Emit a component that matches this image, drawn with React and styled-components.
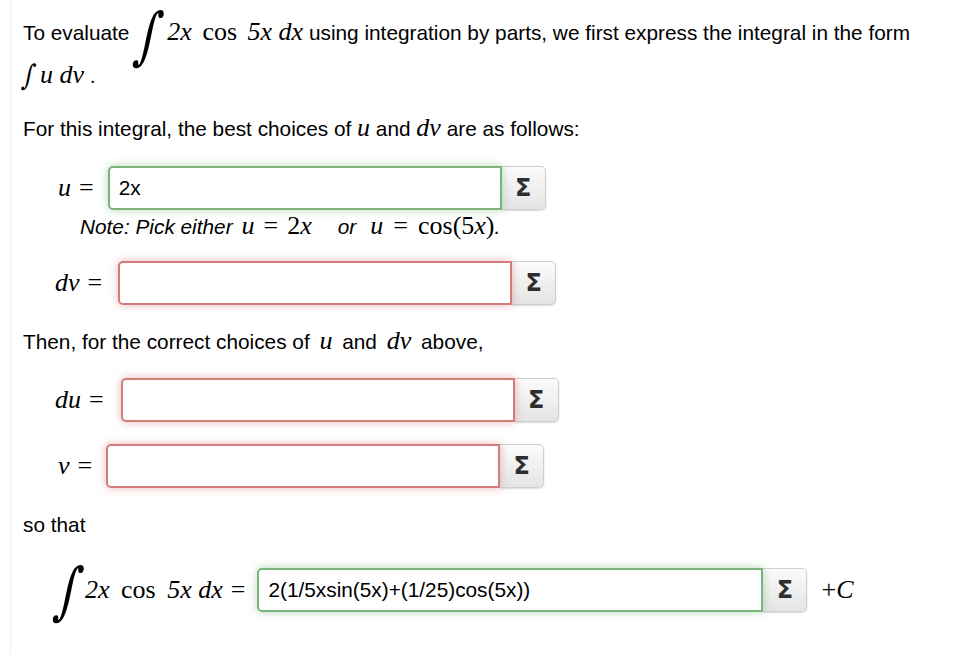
import React from "react";
import styled, { createGlobalStyle } from "styled-components";

const GlobalStyle = createGlobalStyle`
  body {
    margin: 0;
    background: #ffffff;
    font-family: "Liberation Sans", Arial, sans-serif;
    color: #000;
  }
`;

const Page = styled.div`
  margin-left: 10px;
  border-left: 1px solid #f3f3f3;
  min-height: 654px;
  padding: 8px 0 0 12px;
  box-sizing: border-box;
  font-size: 20.8px;
`;

const Para = styled.div`
  line-height: ${(p) => p.$lh || 30}px;
  margin-top: ${(p) => p.$mt || 0}px;
  white-space: nowrap;
`;

const M = styled.span`
  font-family: "Liberation Serif", "Times New Roman", serif;
  font-style: italic;
  font-size: 26px;
  margin: 0 ${(p) => p.$gap || 0}px;
`;

const Up = styled.span`
  font-style: normal;
  margin: 0 ${(p) => p.$gap || 0}px;
`;

const Rel = styled.span`
  font-style: normal;
  margin-left: ${(p) => p.$l ?? 7}px;
  margin-right: ${(p) => p.$r ?? 7}px;
`;

const BigInt = styled.span`
  font-family: "DejaVu Serif", serif;
  font-size: 46px;
  font-style: normal;
  display: inline-block;
  vertical-align: middle;
  padding: 6px 4px;
  transform: scaleY(1.35) skewX(-14deg);
  margin: -6px ${(p) => p.$mr ?? 2}px -6px ${(p) => p.$ml ?? 4}px;
  line-height: 1;
`;

const SmallInt = styled.span`
  font-family: "DejaVu Serif", serif;
  font-size: 23px;
  display: inline-block;
  transform: scaleY(1.25) skewX(-12deg);
  margin-right: 5px;
`;

const Row = styled.div`
  display: flex;
  align-items: center;
  padding-left: ${(p) => p.$indent || 33}px;
  margin-top: ${(p) => p.$mt || 0}px;
`;

const Label = styled.span`
  font-family: "Liberation Serif", "Times New Roman", serif;
  font-style: italic;
  font-size: 26px;
  margin-right: ${(p) => p.$gap || 14}px;
  white-space: pre;
`;

const Field = styled.div`
  display: flex;
  height: 44px;
`;

const Input = styled.div`
  width: ${(p) => p.$w || 394}px;
  box-sizing: border-box;
  border: 2px solid ${(p) => (p.$ok ? "#7bb37b" : "#d47b7b")};
  border-radius: 5px 0 0 5px;
  background: #fff;
  box-shadow: 0 0 9px
    ${(p) =>
      p.$ok ? "rgba(110, 180, 110, 0.5)" : "rgba(220, 110, 110, 0.5)"};
  display: flex;
  align-items: center;
  padding-left: 9px;
  font-size: 20.8px;
  position: relative;
  z-index: 1;
`;

const SigmaBtn = styled.div`
  width: 44px;
  box-sizing: border-box;
  border: 1px solid #cfcfcf;
  border-left: none;
  border-radius: 0 5px 5px 0;
  background: linear-gradient(#fbfbfb, #e4e4e4);
  box-shadow: 0 1px 2px rgba(0, 0, 0, 0.15);
  display: flex;
  align-items: center;
  justify-content: center;
  font-family: "DejaVu Sans", sans-serif;
  font-weight: bold;
  font-size: 24px;
  color: #2e2e2e;
`;

const Note = styled.div`
  padding-left: 57px;
  font-style: italic;
  font-size: 20.8px;
  line-height: 32px;
  white-space: nowrap;
`;

const NoteMath = styled.span`
  font-family: "Liberation Serif", "Times New Roman", serif;
  font-style: normal;
  font-size: 26px;
  margin: 0 ${(p) => p.$r ?? 0}px 0 ${(p) => p.$l ?? 0}px;
`;

const PlusC = styled.span`
  font-family: "Liberation Serif", "Times New Roman", serif;
  font-size: 26px;
  margin-left: 14px;
`;

function AnswerField({ ok, value, width }) {
  return (
    <Field>
      <Input $ok={ok} $w={width}>
        {value}
      </Input>
      <SigmaBtn>Σ</SigmaBtn>
    </Field>
  );
}

export default function App() {
  return (
    <>
      <GlobalStyle />
      <Page>
        <Para $lh={48}>
          To evaluate
          <BigInt>∫</BigInt>
          <M>
            2x <Up $gap={4}>cos</Up> 5x dx
          </M>{" "}
          using integration by parts, we first express the integral in the form
        </Para>
        <Para $lh={34}>
          <SmallInt>∫</SmallInt>
          <M>u dv</M> .
        </Para>
        <Para $mt={20}>
          For this integral, the best choices of <M>u</M> and <M>dv</M> are as
          follows:
        </Para>

        <Row $mt={22} $indent={35}>
          <Label>
            u<Rel $l={8} $r={0}>=</Rel>
          </Label>
          <AnswerField ok value="2x" />
        </Row>
        <Note>
          Note: Pick either
          <NoteMath $l={9} $r={26}>
            <i>u</i>
            <Rel $l={9} $r={9}>=</Rel>2<i>x</i>
          </NoteMath>
          or
          <NoteMath $l={14}>
            <i>u</i>
            <Rel $l={10} $r={10}>=</Rel>cos(5<i>x</i>)
          </NoteMath>
          .
        </Note>
        <Row $mt={18} $indent={32}>
          <Label $gap={16}>
            dv<Rel $l={8} $r={0}>=</Rel>
          </Label>
          <AnswerField />
        </Row>

        <Para $mt={21}>
          Then, for the correct choices of <M $gap={4}>u</M> and{" "}
          <M $gap={4}>dv</M> above,
        </Para>

        <Row $mt={21} $indent={32}>
          <Label $gap={17}>
            du<Rel $l={8} $r={0}>=</Rel>
          </Label>
          <AnswerField />
        </Row>
        <Row $mt={22} $indent={35}>
          <Label $gap={14}>
            v<Rel $l={8} $r={0}>=</Rel>
          </Label>
          <AnswerField />
        </Row>

        <Para $mt={22}>so that</Para>

        <Row $mt={27} $indent={30}>
          <BigInt $ml={0} $mr={0}>
            ∫
          </BigInt>
          <Label $gap={12}>
            2x <Up $gap={5}>cos</Up> 5x dx<Rel $l={8} $r={0}>=</Rel>
          </Label>
          <AnswerField
            ok
            width={506}
            value="2(1/5xsin(5x)+(1/25)cos(5x))"
          />
          <PlusC>
            +<i>C</i>
          </PlusC>
        </Row>
      </Page>
    </>
  );
}
